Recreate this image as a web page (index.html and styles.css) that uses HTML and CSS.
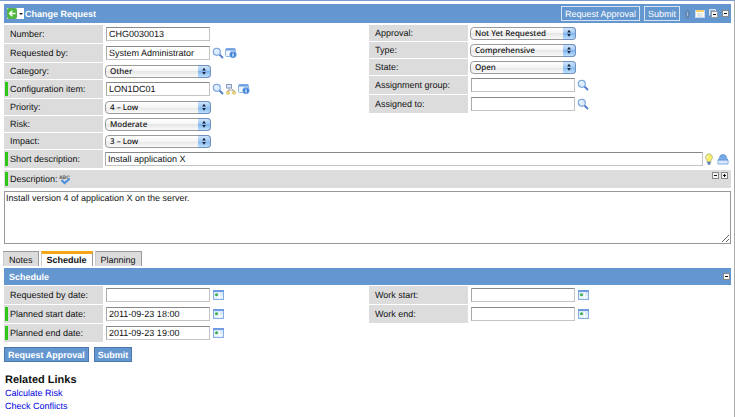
FILE: index.html
```html
<!DOCTYPE html>
<html lang="en">
<head>
<meta charset="utf-8">
<title>Change Request</title>
<link rel="stylesheet" href="styles.css">
</head>
<body>
<svg class="sprites" aria-hidden="true">
  <symbol id="search" viewBox="0 0 12 12"><path d="M7.500 7.500l3 3" stroke="#4f7fcb" stroke-width="1.800" stroke-linecap="round"/><circle cx="4.800" cy="4.800" r="3.500" fill="#dcecfc" stroke="#7fa8e0" stroke-width="1.200"/><path d="M2.800 4.300a2 2 0 0 1 2-1.700" fill="none" stroke="#fff"/></symbol>
  <symbol id="info" viewBox="0 0 12 12"><rect x=".5" y="1.500" width="10" height="8" rx="1" fill="#eef5fd" stroke="#8db4e6"/><path d="M1 2.500h9" stroke="#6b9fe0" stroke-width="2"/><circle cx="8" cy="7.600" r="3.400" fill="#3c82d8" stroke="#a9c9f0" stroke-width=".6"/><path d="M8 5.400v1M8 7v2.600" stroke="#fff" stroke-width="1.200"/></symbol>
  <symbol id="tree" viewBox="0 0 12 12"><path d="M4 5v2.200M3 9.500V7.200h6v2.300" fill="none" stroke="#aaa"/><rect x="1.500" y="1.500" width="5" height="3.500" fill="#dbe8fa" stroke="#8a9dbd"/><path d="M6 5l2 2" stroke="#aaa"/><circle cx="3" cy="9.700" r="1.500" fill="#f6de76" stroke="#c4ab4c" stroke-width=".7"/><circle cx="9" cy="9.700" r="1.500" fill="#f6de76" stroke="#c4ab4c" stroke-width=".7"/></symbol>
  <symbol id="calendar" viewBox="0 0 12 12"><rect x="1.500" y="1.500" width="10" height="9" fill="#dcebfc" stroke="#86aee6"/><path d="M1 2h11" stroke="#6f9be0" stroke-width="2"/><path d="M7.500 4v6M2 8h9" stroke="#fff"/><circle cx="4.500" cy="5.800" r="1.500" fill="#3fae49"/></symbol>
  <symbol id="arrows" viewBox="0 0 12 12"><path d="M6 2l2 3H4zM6 9.500l2-3H4z" fill="#17233a"/></symbol>
  <symbol id="minus" viewBox="0 0 7 7"><rect x=".5" y=".5" width="6" height="6" fill="#f5f5f5" stroke="#888"/><path d="M2 3.500h3" stroke="#111"/></symbol>
  <symbol id="plus" viewBox="0 0 7 7"><rect x=".5" y=".5" width="6" height="6" fill="#f5f5f5" stroke="#888"/><path d="M2 3.500h3M3.500 2v3" stroke="#111"/></symbol>
</svg>
<main class="page">
  <header class="bar">
    <button class="back" type="button" aria-label="Back"><svg viewBox="0 0 17 11" width="17" height="11"><rect width="17" height="11" fill="#fff"/><rect x=".5" y=".5" width="9" height="10" rx="1" fill="#4db83a" stroke="#5fae52"/><path d="M8.500 5.500H3M5.300 2.800L2.600 5.500l2.700 2.700" fill="none" stroke="#fff" stroke-width="1.500"/><path d="M12 5h4l-2 2z" fill="#222"/></svg></button>
    <h1 class="title">Change Request</h1>
    <div class="actions">
      <button class="action" type="button">Request Approval</button>
      <button class="action" type="button">Submit</button>
      <div class="tools">
        <button class="tool" type="button" aria-label="Attachments"><svg viewBox="0 0 7 10" width="7" height="10"><path d="M2 3v4.500a1.500 1.500 0 0 0 3 0V2.500a1.200 1.200 0 0 0-2.400 0" fill="none" stroke="#5f7899"/><path d="M3.500 3v4" stroke="#b8c5d8" stroke-width=".8"/></svg></button>
        <button class="tool" type="button" aria-label="Form settings"><svg viewBox="0 0 10 10" width="10" height="10"><rect x=".5" y="1.500" width="9" height="7" fill="#fffbe8" stroke="#c5dafa"/><path d="M1 2h8" stroke="#f3d46a" stroke-width="2"/><path d="M2 5h6M2 7h6M4 4v4" stroke="#b9d0ee" stroke-width=".7"/></svg></button>
        <button class="tool" type="button" aria-label="Collapse all sections"><svg viewBox="0 0 9 9" width="9" height="9"><path d="M.5 6.500v-6h6v2" fill="#8fb3dd" stroke="#dce6f3"/><rect x="2.500" y="2.500" width="6" height="6" fill="#f5f5f5" stroke="#999"/><path d="M4 5.500h3" stroke="#111"/></svg></button>
        <button class="tool" type="button" aria-label="Collapse section"><svg width="7" height="7"><use href="#minus"/></svg></button>
      </div>
    </div>
  </header>

  <form class="form">
    <div class="columns">
      <div class="column">
        <div class="row"><label class="label" for="number">Number:</label><input class="text" id="number" value="CHG0030013"></div>
        <div class="row"><label class="label" for="requester">Requested by:</label><input class="text" id="requester" value="System Administrator"><span class="icons"><svg class="icon"><use href="#search"/></svg><svg class="icon"><use href="#info"/></svg></span></div>
        <div class="row short"><label class="label" for="category">Category:</label><span class="picker"><select id="category"><option>Other</option></select><svg class="cap"><use href="#arrows"/></svg></span></div>
        <div class="row"><label class="label required" for="item">Configuration item:</label><input class="text" id="item" value="LON1DC01"><span class="icons"><svg class="icon"><use href="#search"/></svg><svg class="icon"><use href="#tree"/></svg><svg class="icon"><use href="#info"/></svg></span></div>
        <div class="row short"><label class="label" for="priority">Priority:</label><span class="picker"><select id="priority"><option>4 – Low</option></select><svg class="cap"><use href="#arrows"/></svg></span></div>
        <div class="row short"><label class="label" for="risk">Risk:</label><span class="picker"><select id="risk"><option>Moderate</option></select><svg class="cap"><use href="#arrows"/></svg></span></div>
        <div class="row short"><label class="label" for="impact">Impact:</label><span class="picker"><select id="impact"><option>3 – Low</option></select><svg class="cap"><use href="#arrows"/></svg></span></div>
      </div>
      <div class="column">
        <div class="row short"><label class="label" for="approval">Approval:</label><span class="picker"><select id="approval"><option>Not Yet Requested</option></select><svg class="cap"><use href="#arrows"/></svg></span></div>
        <div class="row short"><label class="label" for="type">Type:</label><span class="picker"><select id="type"><option>Comprehensive</option></select><svg class="cap"><use href="#arrows"/></svg></span></div>
        <div class="row short"><label class="label" for="state">State:</label><span class="picker"><select id="state"><option>Open</option></select><svg class="cap"><use href="#arrows"/></svg></span></div>
        <div class="row"><label class="label" for="group">Assignment group:</label><input class="text" id="group"><span class="icons"><svg class="icon"><use href="#search"/></svg></span></div>
        <div class="row"><label class="label" for="assignee">Assigned to:</label><input class="text" id="assignee"><span class="icons"><svg class="icon"><use href="#search"/></svg></span></div>
      </div>
    </div>
    <div class="row wide"><label class="label required" for="summary">Short description:</label><input class="text" id="summary" value="Install application X">
      <span class="icons">
        <svg class="icon" viewBox="0 0 12 12"><path d="M6 .8a3.500 3.500 0 0 0-2 6.300V9h4V7.100A3.500 3.500 0 0 0 6 .8z" fill="#f8ee6b" stroke="#a9b47c" stroke-width=".8"/><path d="M5 3a2 2 0 0 0-1 2" stroke="#fff" fill="none"/><path d="M4.300 9.500h3.400M4.700 11h2.600" stroke="#5d7fae" stroke-width="1.300"/></svg>
        <svg class="icon" viewBox="0 0 12 12"><path d="M2.500 5a3.500 3.500 0 0 1 7 0l1.500 2v4H1V7z" fill="#80b0ea" stroke="#5b8fd4" stroke-width=".8"/><path d="M1.300 7h9.400v3.600H1.300z" fill="#d9e9fb"/><path d="M1 7h10M4 3.500h1M7 3.500h1M5.500 5h1" stroke="#5f92d6"/></svg>
      </span>
    </div>
    <div class="strip"><label class="label required" for="details">Description:</label>
      <svg class="spell" viewBox="0 0 12 11" width="12" height="11" aria-hidden="true"><text x="0" y="5" class="abc">ABC</text><path d="M2.500 6l3 3 5-4" fill="none" stroke="#4b91dd" stroke-width="2.200"/></svg>
      <span class="sizers"><button class="tool" type="button" aria-label="Shrink"><svg width="7" height="7"><use href="#minus"/></svg></button><button class="tool" type="button" aria-label="Grow"><svg width="7" height="7"><use href="#plus"/></svg></button></span>
    </div>
    <textarea class="details" id="details">Install version 4 of application X on the server.</textarea>

    <nav class="tabs">
      <button class="tab" type="button">Notes</button>
      <button class="tab current" type="button">Schedule</button>
      <button class="tab" type="button">Planning</button>
    </nav>
    <section>
      <div class="bar slim"><h2 class="title">Schedule</h2><button class="tool" type="button" aria-label="Collapse schedule"><svg width="7" height="7"><use href="#minus"/></svg></button></div>
      <div class="columns">
        <div class="column">
          <div class="row"><label class="label" for="wanted">Requested by date:</label><input class="text" id="wanted"><span class="icons"><svg class="icon"><use href="#calendar"/></svg></span></div>
          <div class="row"><label class="label required" for="start">Planned start date:</label><input class="text" id="start" value="2011-09-23 18:00"><span class="icons"><svg class="icon"><use href="#calendar"/></svg></span></div>
          <div class="row"><label class="label required" for="end">Planned end date:</label><input class="text" id="end" value="2011-09-23 19:00"><span class="icons"><svg class="icon"><use href="#calendar"/></svg></span></div>
        </div>
        <div class="column">
          <div class="row"><label class="label" for="workstart">Work start:</label><input class="text" id="workstart"><span class="icons"><svg class="icon"><use href="#calendar"/></svg></span></div>
          <div class="row"><label class="label" for="workend">Work end:</label><input class="text" id="workend"><span class="icons"><svg class="icon"><use href="#calendar"/></svg></span></div>
        </div>
      </div>
    </section>
    <div class="buttons">
      <button class="solid" type="button">Request Approval</button>
      <button class="solid" type="button">Submit</button>
    </div>
  </form>
  <section class="related">
    <h2 class="heading">Related Links</h2>
    <a class="link" href="#risk">Calculate Risk</a>
    <a class="link" href="#details">Check Conflicts</a>
  </section>
</main>
</body>
</html>
```
FILE: styles.css
```css
* { box-sizing: border-box; }

body {
  margin: 0;
  background: #fff;
  color: #111;
  font: 9px/12px "Liberation Sans", Arial, sans-serif;
  text-rendering: geometricPrecision;
}

button, input, select, textarea { font: inherit; color: inherit; margin: 0; border-radius: 0; text-rendering: inherit; }
svg { display: block; flex: none; }
h1, h2 { margin: 0; }

.sprites { position: absolute; width: 0; height: 0; }

.page {
  min-height: 100vh;
  padding: 3px 3px 0 4px;
  border-top: 1px solid #7d9fd0;
  border-right: 1px solid #aaa;
}

.bar {
  display: flex;
  align-items: center;
  height: 19px;
  padding: 0 2px 0 3px;
  margin-bottom: 2px;
  background: #6497cf;
  color: #fff;
}
.slim { height: 17px; padding: 0 1px 0 5px; margin-bottom: 1px; }
.title { flex: 1; font-size: 9px; font-weight: bold; }

.back, .tool { display: block; padding: 0; border: 0; background: none; }
.back { margin-right: 1px; }

.actions { display: flex; align-items: center; gap: 4px; }
.action {
  height: 15px;
  padding: 0 3px;
  border: 1px solid #d5e3f4;
  background: #6497cf;
  color: #fff;
  line-height: 12px;
}
.tools { display: flex; align-items: center; gap: 4px; }

.columns { display: grid; grid-template-columns: 1fr 1fr; column-gap: 3px; }

.row { display: flex; align-items: center; height: 19px; padding-bottom: 1px; }
.short { height: 17px; }

.label {
  flex: none;
  display: flex;
  align-items: center;
  align-self: stretch;
  width: 99px;
  padding-left: 6px;
  background: #dcdcdc;
}
.required { position: relative; }
.required::before {
  content: "";
  position: absolute;
  left: 1px;
  top: 2px;
  bottom: 2px;
  width: 3px;
  background: #2fc619;
}

.text {
  width: 104px;
  height: 14px;
  margin-left: 3px;
  padding: 0 2px;
  border: 1px solid #c4c4c4;
  border-top-color: #888;
  border-left-color: #aaa;
  background: #fff;
}
.wide .text { flex: 1; margin-left: 2px; padding-left: 2px; }

.icons { display: flex; align-items: center; gap: 1px; margin-left: 2px; }
.icon { width: 12px; height: 12px; }
.wide .icons { gap: 2px; margin-left: 0; padding-right: 2px; }

.picker { position: relative; margin-left: 2px; }
.picker select {
  display: block;
  appearance: none;
  width: 106px;
  height: 13px;
  padding: 0 13px 0 4px;
  border: 1px solid #9a9a9a;
  border-radius: 4px;
  background: linear-gradient(#fff, #f4f4f4 50%, #e6e6e6 50%, #fafafa);
  font: 500 8px/11px "Noto Sans", "Open Sans", sans-serif;
}
.cap {
  position: absolute;
  right: 0;
  top: 0;
  width: 13px;
  height: 13px;
  border: 1px solid #6f92c2;
  border-left: 0;
  border-radius: 0 4px 4px 0;
  background: linear-gradient(#cfe4fa, #9cc6f3 50%, #7fb5ee 50%, #bfe0fb);
  pointer-events: none;
}

.strip {
  display: flex;
  align-items: center;
  height: 18px;
  margin: 1px 0 3px;
  background: #dcdcdc;
}
.strip .label { width: auto; padding-right: 1px; }
.abc { font: bold 5px "Liberation Sans", sans-serif; fill: #555; }
.sizers { display: flex; gap: 2px; margin-left: auto; align-self: flex-start; padding: 2px 3px 0 0; }

.details {
  display: block;
  width: 100%;
  height: 53px;
  padding: 0 1px;
  border: 1px solid #999;
  resize: vertical;
}

.tabs { display: flex; align-items: flex-end; gap: 2px; margin: 7px 0 2px -1px; }
.tab {
  height: 15px;
  padding: 2px 5px 0;
  border: 1px solid #999;
  border-bottom: 0;
  border-left-color: #ccc;
  background: #dcdcdc;
  line-height: 12px;
}
.current { border-top: 3px solid #f5a614; padding-top: 0; background: #fff; font-weight: bold; }

.buttons { display: flex; gap: 5px; margin-top: 4px; }
.solid {
  height: 15px;
  padding: 0 3px;
  border: 1px solid #4a78ad;
  background: #6497cf;
  color: #fff;
  font-weight: bold;
  line-height: 12px;
}

.related { display: flex; flex-direction: column; align-items: flex-start; padding: 12px 0 0 1px; }
.heading { font-size: 11px; line-height: 13px; }
.link { color: #0000e0; text-decoration: none; line-height: 13px; }
```
